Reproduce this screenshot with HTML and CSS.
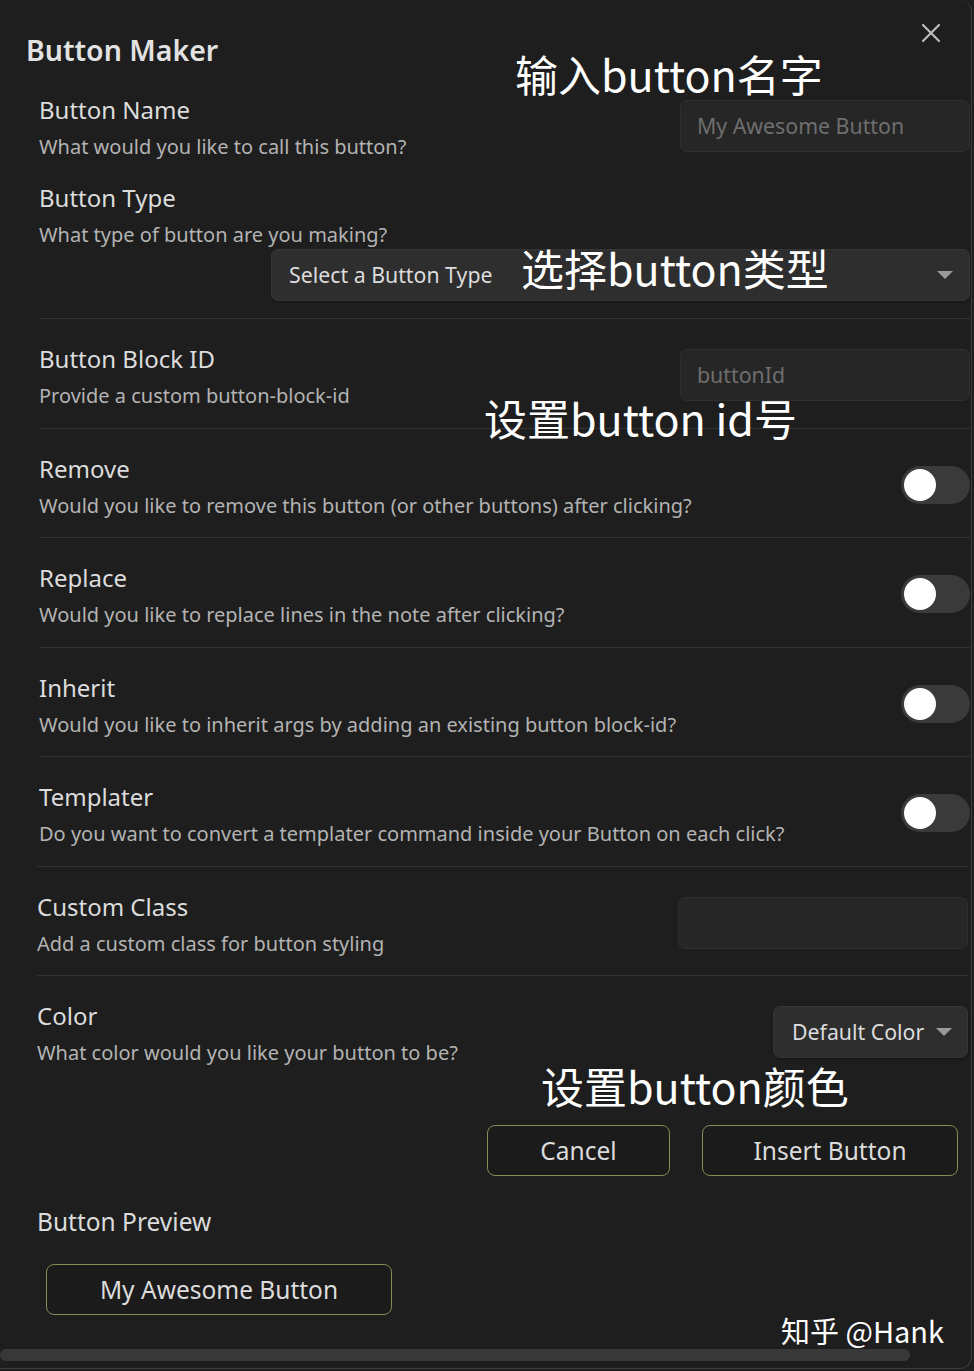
FILE: index.html
```html
<!DOCTYPE html>
<html lang="en">
<head>
<meta charset="utf-8">
<title>Button Maker</title>
<link rel="stylesheet" href="styles.css">
</head>
<body>
<div class="modal">
  <div class="close" aria-label="Close">
    <svg width="20" height="20" viewBox="0 0 20 20"><path d="M2 2 L18 18 M18 2 L2 18" stroke="#bdbdbd" stroke-width="2.2" stroke-linecap="round" fill="none"/></svg>
  </div>
  <h1 class="title">Button Maker</h1>

  <div class="group group-a">
    <div class="setting first">
      <div class="info">
        <div class="name">Button Name</div>
        <div class="desc">What would you like to call this button?</div>
      </div>
      <div class="control"><div class="input placeholder"><span class="field-text">My Awesome Button</span></div></div>
    </div>
    <div class="setting wrap">
      <div class="info">
        <div class="name">Button Type</div>
        <div class="desc">What type of button are you making?</div>
      </div>
      <div class="control"><div class="select wide"><span class="field-text">Select a Button Type</span><span class="arrow"></span></div></div>
    </div>
    <div class="setting bordered">
      <div class="info">
        <div class="name">Button Block ID</div>
        <div class="desc">Provide a custom button-block-id</div>
      </div>
      <div class="control"><div class="input placeholder"><span class="field-text">buttonId</span></div></div>
    </div>
    <div class="setting bordered">
      <div class="info">
        <div class="name">Remove</div>
        <div class="desc">Would you like to remove this button (or other buttons) after clicking?</div>
      </div>
      <div class="control"><div class="toggle"><span class="knob"></span></div></div>
    </div>
    <div class="setting bordered">
      <div class="info">
        <div class="name">Replace</div>
        <div class="desc">Would you like to replace lines in the note after clicking?</div>
      </div>
      <div class="control"><div class="toggle"><span class="knob"></span></div></div>
    </div>
    <div class="setting bordered">
      <div class="info">
        <div class="name">Inherit</div>
        <div class="desc">Would you like to inherit args by adding an existing button block-id?</div>
      </div>
      <div class="control"><div class="toggle"><span class="knob"></span></div></div>
    </div>
    <div class="setting bordered">
      <div class="info">
        <div class="name">Templater</div>
        <div class="desc">Do you want to convert a templater command inside your Button on each click?</div>
      </div>
      <div class="control"><div class="toggle"><span class="knob"></span></div></div>
    </div>
  </div>

  <div class="group group-b">
    <div class="setting bordered">
      <div class="info">
        <div class="name">Custom Class</div>
        <div class="desc">Add a custom class for button styling</div>
      </div>
      <div class="control"><div class="input"></div></div>
    </div>
    <div class="setting bordered last">
      <div class="info">
        <div class="name">Color</div>
        <div class="desc">What color would you like your button to be?</div>
      </div>
      <div class="control"><div class="select small"><span class="field-text">Default Color</span><span class="arrow"></span></div></div>
    </div>
  </div>

  <div class="actions">
    <div class="btn cancel">Cancel</div>
    <div class="btn insert">Insert Button</div>
  </div>

  <div class="preview">
    <div class="preview-title">Button Preview</div>
    <div class="btn preview-btn">My Awesome Button</div>
  </div>

  <div class="scrollbar"></div>

  <div class="note note-1">输入button名字</div>
  <div class="note note-2">选择button类型</div>
  <div class="note note-3">设置button id号</div>
  <div class="note note-4">设置button颜色</div>
  <div class="watermark">知乎 @Hank</div>
</div>
</body>
</html>
```

FILE: styles.css
```css
* { box-sizing: border-box; }
html, body {
  margin: 0;
  padding: 0;
  background: #1e1e1e;
}
body {
  font-family: "Noto Sans", "Open Sans", "Noto Sans CJK SC", sans-serif;
  color: #dadada;
  overflow: hidden;
}
.modal {
  position: relative;
  width: 972px;
  height: 1369px;
  border-right: 1px solid #3c3c3c;
  border-bottom: 1px solid #3c3c3c;
  border-radius: 0 12px 12px 0;
  padding-top: 30px;
  display: flex;
  flex-direction: column;
}
.close {
  position: absolute;
  top: 23px;
  left: 921px;
  width: 20px;
  height: 20px;
}
.close svg { display: block; }
.title {
  margin: 0 0 0 26px;
  font-size: 28.5px;
  line-height: 40px;
  font-weight: 600;
  color: #e2e2e2;
}
.group {
  display: flex;
  flex-direction: column;
}
.group-a { margin-left: 39px; width: 931px; }
.group-b { margin-left: 37px; width: 931px; }
.setting {
  display: flex;
  align-items: center;
  justify-content: space-between;
  padding: 25px 0 17.5px;
}
.setting.bordered { border-top: 1px solid #333; }
.setting.first { padding-bottom: 22px; }
.setting.wrap {
  flex-direction: column;
  align-items: stretch;
  padding-top: 0;
  padding-bottom: 17px;
}
.setting.wrap .control { align-self: flex-end; margin-bottom: 0; }
.control { margin-bottom: 4px; }
.info {
  display: flex;
  flex-direction: column;
  gap: 8px;
}
.name {
  font-size: 24px;
  line-height: 30px;
  color: #dcdcdc;
}
.desc {
  font-size: 20px;
  line-height: 28px;
  color: #b3b3b3;
}
.field-text { line-height: 24px; }
.input {
  width: 290px;
  height: 52px;
  background: #262626;
  border: 1px solid #2f2f2f;
  border-radius: 7px;
  padding: 0 16px;
  display: flex;
  align-items: center;
  font-size: 21.3px;
}
.placeholder { color: #6e6e6e; }
.select {
  height: 52px;
  background: #2e2e2e;
  border: 1px solid #363636;
  border-radius: 7px;
  box-shadow: 0 1px 2px rgba(0,0,0,0.4);
  display: flex;
  align-items: center;
  justify-content: space-between;
  font-size: 21.3px;
  color: #dcdcdc;
}
.select.wide { width: 699px; padding: 0 16px 0 17px; }
.select.small { width: 195px; padding: 0 15px 0 18px; }
.arrow {
  width: 0;
  height: 0;
  border-left: 8px solid transparent;
  border-right: 8px solid transparent;
  border-top: 8px solid #9a9a9a;
}
.toggle {
  width: 69px;
  height: 38px;
  border-radius: 19px;
  background: #3a3a3a;
  padding: 3px;
  display: flex;
  align-items: center;
}
.knob {
  width: 32px;
  height: 32px;
  border-radius: 50%;
  background: #fff;
}
.actions {
  display: flex;
  justify-content: flex-end;
  gap: 32px;
  margin-top: 40.5px;
  padding-right: 13px;
}
.btn {
  height: 51px;
  border: 1px solid #8a8a58;
  border-radius: 8px;
  background: #1b1b1b;
  display: flex;
  align-items: center;
  justify-content: center;
  font-size: 24.5px;
  color: #dcdcdc;
}
.cancel { width: 183px; }
.insert { width: 256px; }
.preview {
  margin-left: 37px;
  margin-top: 30px;
  display: flex;
  flex-direction: column;
  align-items: flex-start;
}
.preview-title {
  font-size: 24.5px;
  line-height: 32px;
  color: #dcdcdc;
}
.preview-btn {
  margin-top: 26px;
  margin-left: 9px;
  width: 346px;
}
.scrollbar {
  margin-top: auto;
  margin-bottom: 7px;
  width: 910px;
  height: 12px;
  border-radius: 6px;
  background: #383838;
}
.note {
  position: absolute;
  font-family: "Noto Sans CJK SC", sans-serif;
  font-size: 43px;
  line-height: 43px;
  color: #ffffff;
  white-space: nowrap;
}
.note-1 { left: 515px; top: 52px; }
.note-2 { left: 521px; top: 246px; }
.note-3 { left: 484px; top: 396px; }
.note-4 { left: 541px; top: 1064px; }
.watermark {
  position: absolute;
  left: 781px;
  top: 1311px;
  font-family: "Noto Sans CJK SC", sans-serif;
  font-size: 29px;
  line-height: 38px;
  color: #ffffff;
  white-space: nowrap;
}
```
